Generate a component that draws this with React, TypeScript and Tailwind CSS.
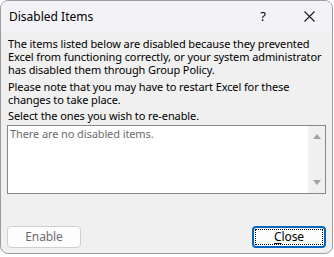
import React from 'react';

function DisabledItemsDialog() {
  return (
    <div className="w-[333px] h-[254px] rounded-lg border border-[#9c9c9c] overflow-hidden bg-[#f0f0f0] flex flex-col" style={{ fontFamily: '"Noto Sans", "Liberation Sans", sans-serif' }}>
      {/* title bar */}
      <div className="h-[31px] bg-[#f3f3f7] flex items-center pl-[8px] shrink-0">
        <span className="text-[12px] text-black flex-1 leading-none">Disabled Items</span>
        <span className="text-[13px] text-black w-[46px] text-center leading-none">?</span>
        <span className="w-[46px] flex items-center justify-center">
          <svg width="11" height="11" viewBox="0 0 11 11">
            <path d="M0.5 0.5 L10.5 10.5 M10.5 0.5 L0.5 10.5" stroke="#1a1a1a" strokeWidth="1.1" />
          </svg>
        </span>
      </div>

      {/* body */}
      <div className="flex-1 flex flex-col px-[6px] pt-[5px] text-[11px] text-black leading-[13.2px] whitespace-nowrap tracking-[-0.1px]">
        <p className="pl-[1px]">
          The items listed below are disabled because they prevented<br />
          Excel from functioning correctly, or your system administrator<br />
          has disabled them through Group Policy.
        </p>
        <p className="pl-[1px] mt-[3px]">
          Please note that you may have to restart Excel for these<br />
          changes to take place.
        </p>
        <p className="pl-[1px] mt-[3px]">Select the ones you wish to re-enable.</p>

        <div className="mt-[3px] h-[69px] border border-[#828790] bg-white flex shrink-0">
          <div className="flex-1 pl-[2px] pt-[1px] text-[#6d6d6d]">There are no disabled items.</div>
          <div className="w-[17px] bg-[#f0f0f0] flex flex-col items-center justify-between py-[8px]">
            <svg width="8" height="5" viewBox="0 0 8 5"><path d="M0 5 L4 0 L8 5 Z" fill="#a3a3a3" /></svg>
            <svg width="8" height="5" viewBox="0 0 8 5"><path d="M0 0 L4 5 L8 0 Z" fill="#a3a3a3" /></svg>
          </div>
        </div>

        <div className="flex justify-between mt-[32px] shrink-0">
          <button className="w-[74px] h-[22px] rounded-[4px] border border-[#cfcfcf] bg-[#fdfdfd] text-[#6d6d6d] text-[12px] leading-none">
            Enable
          </button>
          <button className="w-[74px] h-[22px] rounded-[4px] border-2 border-[#0067c0] bg-[#fdfdfd] p-[1px]">
            <span className="w-full h-full flex items-center justify-center border border-dotted border-black text-[12px] text-black leading-none">
              <span className="underline underline-offset-2">C</span>lose
            </span>
          </button>
        </div>
      </div>
    </div>
  );
}

export default function App() {
  return (
    <div className="w-[334px] h-[257px] bg-white overflow-hidden">
      <DisabledItemsDialog />
    </div>
  );
}
